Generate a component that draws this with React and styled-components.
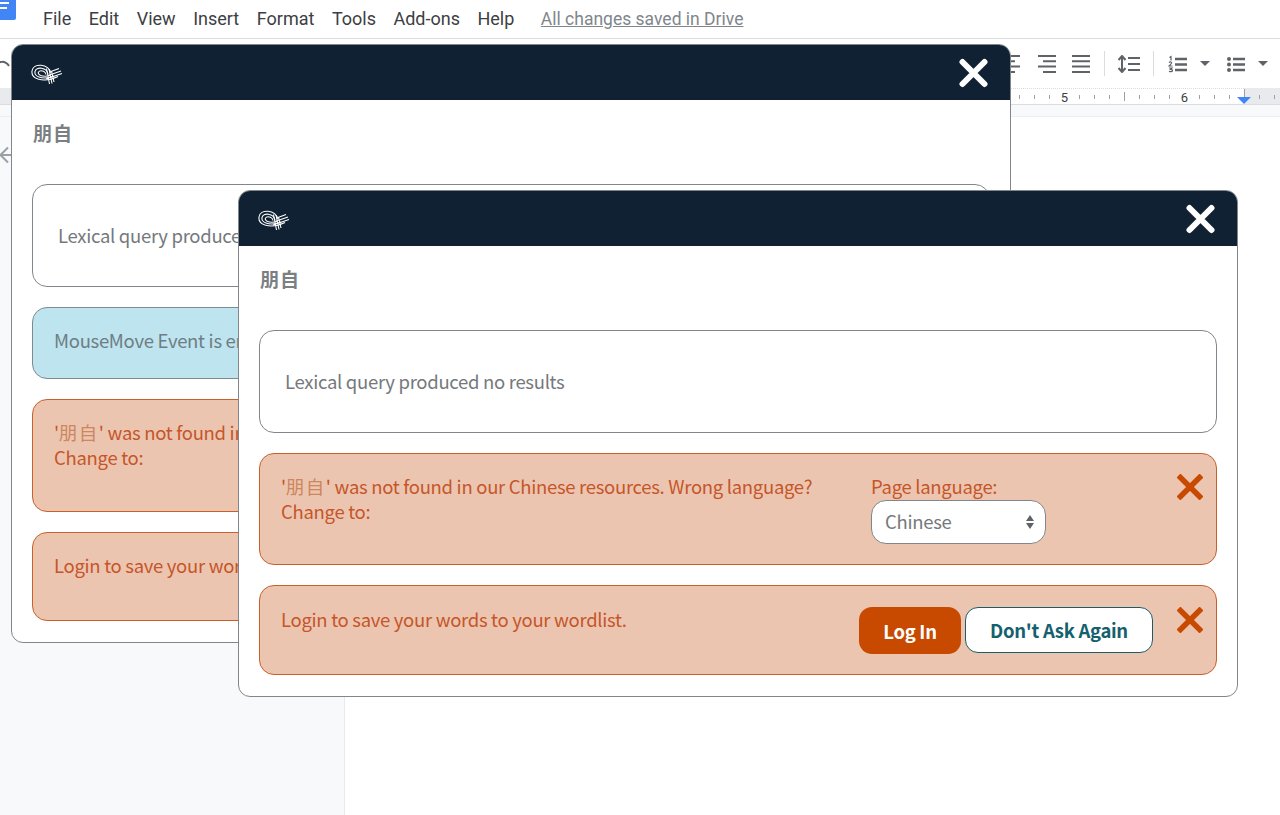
import React from 'react';
import styled, { createGlobalStyle } from 'styled-components';

const Global = createGlobalStyle`
  html, body { margin: 0; padding: 0; height: 815px; overflow: hidden; background: #fff; }
  #root { height: 815px; }
  * { box-sizing: border-box; }
`;

const Page = styled.div`
  position: relative;
  width: 1280px;
  height: 815px;
  overflow: hidden;
  display: flex;
  flex-direction: column;
  font-family: "Noto Sans CJK SC", "Noto Sans", sans-serif;
`;

/* ---- the document editor behind the popups ---- */
const MenuBar = styled.div`
  height: 39px;
  flex: none;
  display: flex;
  align-items: center;
  padding: 0 0 0 43px;
  border-bottom: 1px solid #dadce0;
  font: 18px/24px Roboto, sans-serif;
  color: #3c4043;
  gap: 17.5px;
`;

const DocIcon = styled.svg`
  position: absolute;
  left: 0;
  top: 0;
`;

const Saved = styled.span`
  margin-left: 9px;
  font-size: 17.5px;
  color: #80868b;
  text-decoration: underline;
`;

const Toolbar = styled.div`
  height: 49px;
  flex: none;
  display: flex;
  align-items: center;
  padding-right: 12px;
`;

const ToolIcon = styled.svg`
  display: block;
  flex: none;
  margin-left: ${p => p.$gap || 0}px;
`;

const Undo = styled.svg`
  display: block;
  flex: none;
  margin-right: auto;
`;

const Divider = styled.div`
  width: 1px;
  height: 25px;
  background: #dadce0;
  margin-left: ${p => p.$gap}px;
`;

const Ruler = styled.div`
  height: 17px;
  flex: none;
  display: flex;
  background: #e8eaed;
  border-bottom: 1px solid #dadce0;
`;

const RulerTrack = styled.div`
  position: relative;
  margin-left: 1011px;
  width: 233px;
  height: 16px;
  background: #fff;
  border-top: 1px dotted #dadce0;
`;

const RulerTick = styled.i`
  position: absolute;
  top: ${p => (p.$long ? 3 : 6)}px;
  width: 1px;
  height: ${p => (p.$long ? 9 : 4)}px;
  background: #9aa0a6;
`;

const RulerNum = styled.span`
  position: absolute;
  top: 0;
  width: 12px;
  margin-left: -6px;
  text-align: center;
  font: 13px/17px Roboto, sans-serif;
  color: #3c4043;
`;

const MarkerStem = styled.i`
  position: absolute;
  right: -1px;
  top: 0;
  width: 1px;
  height: 9px;
  background: #9aa0a6;
`;

const Marker = styled.i`
  position: absolute;
  right: -7px;
  top: 8px;
  border-top: 7px solid #4285f4;
  border-left: 7px solid transparent;
  border-right: 7px solid transparent;
`;

const RulerBand = styled.div`
  height: 12px;
  flex: none;
  background: #f8f9fa;
  border-bottom: 1px solid #eceef0;
`;

const DocBody = styled.div`
  flex: 1;
  display: flex;
`;

const Sidebar = styled.div`
  width: 345px;
  background: #f8f9fa;
  border-right: 1px solid #e8eaed;
  position: relative;
`;

const BackArrow = styled.svg`
  position: absolute;
  left: -2px;
  top: 28px;
`;

/* ---- popup windows ---- */
const Window = styled.div`
  position: absolute;
  left: ${p => p.$x}px;
  top: ${p => p.$y}px;
  width: 1000px;
  background: #fff;
  border: 1px solid #80868b;
  border-radius: 12px;
  overflow: hidden;
`;

const Header = styled.div`
  height: 55px;
  background: #0f2133;
  display: flex;
  align-items: center;
  justify-content: space-between;
  padding: 0 21px 0 19px;
`;

const LogoMark = styled.svg`
  display: block;
  margin-top: 4px;
`;

const Body = styled.div`
  padding: 20px 20px 21px;
  display: flex;
  flex-direction: column;
  gap: 20px;
`;

const Title = styled.div`
  height: 44px;
  padding-left: 1px;
  font: 700 19px/25px "Noto Sans CJK SC", serif;
  letter-spacing: 1px;
  color: #7b7f82;
`;

const Box = styled.div`
  border: 1px solid #80868b;
  border-radius: 15px;
  display: flex;
  font-size: 18.5px;
  letter-spacing: -0.3px;
  line-height: 25px;
  background: ${p => p.$bg || '#fff'};
`;

const Result = styled(Box)`
  height: 103px;
  align-items: center;
  padding: 0 25px;
  color: #75797c;
`;

const Info = styled(Box)`
  height: 72px;
  padding: 20px 21px;
  color: #6f7d83;
  border-color: #7f8a8f;
`;

const Alert = styled(Box)`
  height: ${p => p.$h}px;
  padding: ${p => p.$top || 20}px 13px 0 21px;
  border-color: #c9602c;
  color: #c5562a;
`;

const Message = styled.div`
  flex: 1;
`;

const Cjk = styled.span`
  font-size: 18.5px;
  letter-spacing: 1.5px;
  color: #cd8660;
`;

const LangBlock = styled.div`
  width: 282px;
`;

const LangLabel = styled.div`
  margin-bottom: 1px;
`;

const SelectWrap = styled.div`
  position: relative;
  width: 175px;
`;

const LangSelect = styled.select`
  appearance: none;
  display: block;
  width: 100%;
  height: 44px;
  padding: 0 13px 2px;
  border: 1px solid #80868b;
  border-radius: 15px;
  background: #fff;
  color: #75797c;
  font: 18.5px "Noto Sans CJK SC", sans-serif;
  letter-spacing: -0.3px;
`;

const SelectArrows = styled.svg`
  position: absolute;
  right: 11px;
  top: 14px;
  pointer-events: none;
`;

const Buttons = styled.div`
  display: flex;
  gap: 4px;
`;

const LoginBtn = styled.button`
  width: 102px;
  height: 47px;
  border: 0;
  border-radius: 13px;
  background: #c74a00;
  color: #fff;
  font: 700 18.5px "Noto Sans CJK SC", sans-serif;
  letter-spacing: -0.3px;
`;

const SkipBtn = styled.button`
  width: 188px;
  height: 46px;
  border: 1px solid #1c5c6b;
  border-radius: 13px;
  background: #fff;
  color: #14606e;
  font: 700 18.5px "Noto Sans CJK SC", sans-serif;
  letter-spacing: -0.3px;
`;

const CloseAlert = styled.svg`
  flex: none;
  margin-left: 24px;
`;

const Logo = () => (
  <LogoMark width="32" height="21" viewBox="0 0 32 21" fill="none" stroke="#fff" strokeWidth="1.1">
    <path d="M27 12.500c-7 3.500-15 4-20 2.500C2.500 13.500.5 10.500 1 7 1.500 3 5.500 1 10 1.200c5 .2 9 3.500 10 8" />
    <path d="M23 12c-5 2-11 2.500-15 1C5 11.800 3.500 9.500 4 7.500 4.500 5 7.500 3.800 10.500 4.200c3.500.5 6 3 6.500 6" />
    <path d="M19 11.500c-3.500 1-7 1-9.500 0C7.500 10.500 6.800 9 7.500 8c.8-1.200 3-1.500 5-.8 1.500.6 2.200 1.800 2.500 3.300" />
    <path d="M15.500 4.500l3 15.500M18 5l3 14.500M20.500 7l2.500 11" />
    <path d="M15 15l16-5.500M17 11.500l13-4.500M20 7.500l8-3" />
  </LogoMark>
);

const BigX = () => (
  <svg width="30" height="30" viewBox="0 0 30 30" stroke="#fff" strokeWidth="6" strokeLinecap="round">
    <path d="M3.500 4l22 22M25.500 4l-22 22" />
  </svg>
);

const AlertX = () => (
  <CloseAlert width="26" height="26" viewBox="0 0 26 26" stroke="#c74a00" strokeWidth="5.5">
    <path d="M1.500 1.500l23 23M24.500 1.500l-23 23" />
  </CloseAlert>
);

const Line = ({ d, w = 18, gap }) => (
  <ToolIcon $gap={gap} width={w} height="18" viewBox={`0 0 ${w} 18`} stroke="#5f6368" strokeWidth="2" fill="none">
    <path d={d} />
  </ToolIcon>
);

const Caret = ({ gap }) => (
  <ToolIcon $gap={gap} width="10" height="5" viewBox="0 0 10 5" fill="#5f6368">
    <path d="M0 0h10L5 5z" />
  </ToolIcon>
);

const ticks = [1019, 1034, 1049, 1079, 1094, 1109, 1139, 1154, 1169, 1199, 1214, 1229];

const notFound = <>'<Cjk>朋自</Cjk>' was not found in our Chinese resources. Wrong language?<br />Change to:</>;

const First = () => (
  <Window $x={11} $y={44}>
    <Header>
      <Logo />
      <BigX />
    </Header>
    <Body>
      <Title>朋自</Title>
      <Result>Lexical query produced no results</Result>
      <Info $bg="#bde4ef">MouseMove Event is enabled</Info>
      <Alert $h={113} $bg="#ecc5b0">
        <Message>{notFound}</Message>
      </Alert>
      <Alert $h={89} $bg="#ecc5b0">
        <Message>Login to save your words to your wordlist.</Message>
      </Alert>
    </Body>
  </Window>
);

const Second = () => (
  <Window $x={238} $y={190}>
    <Header>
      <Logo />
      <BigX />
    </Header>
    <Body>
      <Title>朋自</Title>
      <Result>Lexical query produced no results</Result>
      <Alert $h={112} $bg="#ecc5b0">
        <Message>{notFound}</Message>
        <LangBlock>
          <LangLabel>Page language:</LangLabel>
          <SelectWrap>
            <LangSelect defaultValue="Chinese"><option>Chinese</option></LangSelect>
            <SelectArrows width="10" height="16" viewBox="0 0 10 16" fill="#5f6368">
              <path d="M5 1l4 6H1zM5 15l4-6H1z" />
            </SelectArrows>
          </SelectWrap>
        </LangBlock>
        <AlertX />
      </Alert>
      <Alert $h={90} $bg="#ecc5b0" $top={21}>
        <Message>Login to save your words to your wordlist.</Message>
        <Buttons>
          <LoginBtn>Log In</LoginBtn>
          <SkipBtn>Don't Ask Again</SkipBtn>
        </Buttons>
        <AlertX />
      </Alert>
    </Body>
  </Window>
);

export default function App() {
  return (
    <Page>
      <Global />
      <DocIcon width="17" height="21" viewBox="0 0 17 21">
        <path d="M0 0h16v18a2 2 0 0 1-2 2H0z" fill="#4285f4" />
        <path d="M0 2h9v2H0zM0 7h7v2H0z" fill="#fff" />
      </DocIcon>
      <MenuBar>
        <span>File</span><span>Edit</span><span>View</span><span>Insert</span><span>Format</span>
        <span>Tools</span><span>Add-ons</span><span>Help</span>
        <Saved>All changes saved in Drive</Saved>
      </MenuBar>
      <Toolbar>
        <Undo width="10" height="10" viewBox="0 0 10 10" fill="none" stroke="#5f6368" strokeWidth="2">
          <path d="M-4 7C-2 2 5 1 9 7" />
        </Undo>
        <Line d="M0 1h18M0 6.300h13M0 11.600h18M0 17h13" />
        <Line gap={18} d="M0 1h18M5 6.300h13M0 11.600h18M5 17h13" />
        <Line gap={16} d="M0 1h18M0 6.300h18M0 11.600h18M0 17h18" />
        <Divider $gap={14} />
        <ToolIcon $gap={13} width="22" height="18" viewBox="0 0 22 18" fill="none" stroke="#5f6368" strokeWidth="2">
          <path d="M4 2v14M.5 5L4 1l3.500 4M.5 13L4 17l3.500-4M10 3h12M10 9h12M10 15h12" />
        </ToolIcon>
        <Divider $gap={13} />
        <ToolIcon $gap={14} width="19" height="18" viewBox="0 0 19 18" fill="none" stroke="#5f6368">
          <path strokeWidth="2.500" d="M7 4h12M7 9.500h12M7 15h12" />
          <path strokeWidth="1.200" d="M1.500 2.500l1.500-1v4M1 7.500c1-1 3-.5 2.500.8L1 11h3.500M1 13h3l-1.500 1.500c1.500 0 2 .5 2 1.200 0 1-2 1.300-3.500.5" />
        </ToolIcon>
        <Caret gap={13} />
        <ToolIcon $gap={17} width="18" height="18" viewBox="0 0 18 18" fill="none" stroke="#5f6368">
          <path strokeWidth="2.500" d="M6 4h12M6 9.500h12M6 15h12" />
          <path strokeWidth="0" fill="#5f6368" d="M0 4a2 2 0 1 0 4 0a2 2 0 1 0-4 0M0 9.500a2 2 0 1 0 4 0a2 2 0 1 0-4 0M0 15a2 2 0 1 0 4 0a2 2 0 1 0-4 0" />
        </ToolIcon>
        <Caret gap={13} />
      </Toolbar>
      <Ruler>
        <RulerTrack>
          {ticks.map(x => <RulerTick key={x} style={{ left: x - 1011 }} />)}
          <RulerTick $long style={{ left: 1124 - 1011 }} />
          <RulerNum style={{ left: 1064.5 - 1011 }}>5</RulerNum>
          <RulerNum style={{ left: 1184.5 - 1011 }}>6</RulerNum>
          <MarkerStem />
          <Marker />
          <RulerTick style={{ left: 1259 - 1011 }} />
          <RulerTick style={{ left: 1274 - 1011 }} />
        </RulerTrack>
      </Ruler>
      <RulerBand />
      <DocBody>
        <Sidebar>
          <BackArrow width="20" height="20" viewBox="0 0 20 20" fill="none" stroke="#9aa0a6" strokeWidth="2">
            <path d="M19 10H3M10 2.500L2.500 10l7.500 7.500" />
          </BackArrow>
        </Sidebar>
      </DocBody>
      <First />
      <Second />
    </Page>
  );
}
